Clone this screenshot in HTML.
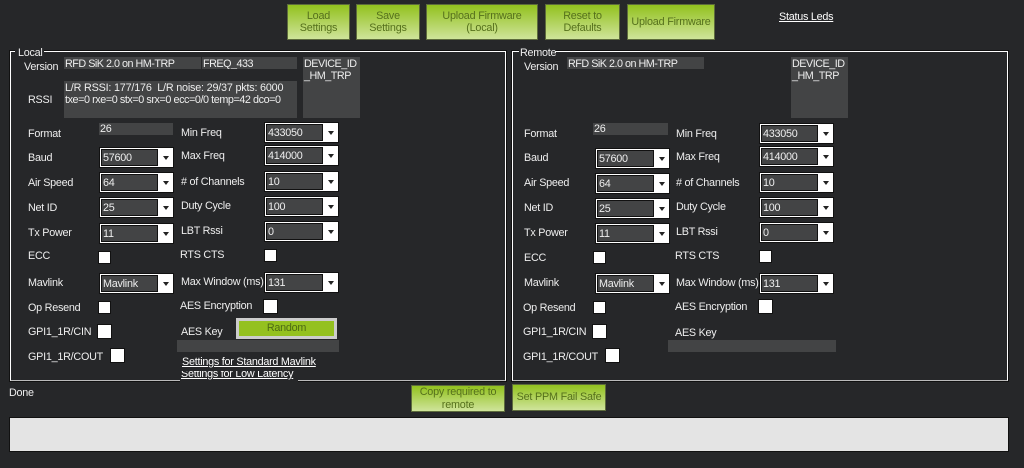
<!DOCTYPE html>
<html><head><meta charset="utf-8"><style>
html,body{margin:0;padding:0;background:#262729}
#p{position:relative;width:1024px;height:468px;overflow:hidden;background:#262729;font:10.8px "Liberation Sans",sans-serif;letter-spacing:-.25px;color:#eee}
#p *{position:absolute;box-sizing:border-box}
.l{white-space:nowrap;line-height:14px;margin-top:1px}
.b{background:linear-gradient(#92c11e,#cfe49a);border:1px solid #5d6b3c;color:#55701c;text-align:center;line-height:12.5px;display:flex;align-items:center;justify-content:center;white-space:nowrap;letter-spacing:-.2px}
.f{background:#434445;color:#eee;line-height:12px;padding:0 0 0 1px;white-space:pre;overflow:hidden}
.r{padding-top:1px}
.t{letter-spacing:-.5px}
.c{width:75px;height:21px;background:#fff;border:1px solid #111}
.c i{left:1px;top:1px;width:57px;height:17px;background:#434445;border:1px solid #111;font-style:normal;color:#eee;line-height:16px;padding-left:1px}
.c u{left:63px;top:8px;width:0;height:0;border:3px solid transparent;border-top:4px solid #222;border-bottom:0}
.k{background:#fff;width:11px;height:11px;box-shadow:0 0 0 1px #111}
.k2{width:13px;height:13px}
.g{border:1px solid #fff;border-bottom-color:#bbb;box-shadow:0 0 0 1px #111}
.s{background:#262729}
.a{color:#fff;text-decoration:underline;white-space:nowrap;line-height:14px}
</style></head><body><div id="p">
<div class="b" style="left:287px;top:4px;width:63px;height:36px">Load<br>Settings</div>
<div class="b" style="left:356px;top:4px;width:64px;height:36px">Save<br>Settings</div>
<div class="b" style="left:426px;top:4px;width:112px;height:36px">Upload Firmware<br>(Local)</div>
<div class="b" style="left:545px;top:4px;width:75px;height:36px">Reset to<br>Defaults</div>
<div class="b" style="left:627px;top:4px;width:88px;height:36px">Upload Firmware</div>
<span class="a" style="left:779px;top:10px">Status Leds</span>

<div class="g" style="left:10px;top:51px;width:496px;height:330px"></div>
<div class="s" style="left:15px;top:46px;width:29px;height:10px"></div>
<span class="l" style="left:18px;top:45px">Local</span>
<div class="g" style="left:512px;top:51px;width:496px;height:330px"></div>
<div class="s" style="left:519px;top:46px;width:36px;height:10px"></div>
<span class="l" style="left:520px;top:45px">Remote</span>

<!-- Local -->
<span class="l" style="left:24px;top:59px">Version</span>
<div class="f r t" style="left:64px;top:57px;width:233px;height:12px">RFD SiK 2.0 on HM-TRP</div>
<div class="f r t" style="left:201px;top:57px;width:96px;height:12px;border-left:1px solid #262729">FREQ_433</div>
<div class="f r t" style="left:303px;top:57px;width:57px;height:61px">DEVICE_ID
_HM_TRP</div>
<div class="f r" style="left:64px;top:81px;width:233px;height:37px;letter-spacing:-.2px">L/R RSSI: 177/176  L/R noise: 29/37 pkts: 6000
<span style="position:static;letter-spacing:-.43px">txe=0 rxe=0 stx=0 srx=0 ecc=0/0 temp=42 dco=0</span></div>
<span class="l" style="left:28px;top:92px">RSSI</span>
<span class="l" style="left:28px;top:126px">Format</span>
<div class="f" style="left:99px;top:123px;width:74px;height:12px">26</div>
<span class="l" style="left:28px;top:150px">Baud</span>
<div class="c" style="left:99px;top:147px"><i>57600</i><u></u></div>
<span class="l" style="left:28px;top:175px">Air Speed</span>
<div class="c" style="left:99px;top:172px"><i>64</i><u></u></div>
<span class="l" style="left:28px;top:200px">Net ID</span>
<div class="c" style="left:99px;top:197px"><i>25</i><u></u></div>
<span class="l" style="left:28px;top:225px">Tx Power</span>
<div class="c" style="left:99px;top:223px"><i>11</i><u></u></div>
<span class="l" style="left:28px;top:248px">ECC</span>
<div class="k" style="left:99px;top:252px"></div>
<span class="l" style="left:28px;top:275px">Mavlink</span>
<div class="c" style="left:99px;top:273px"><i>Mavlink</i><u></u></div>
<span class="l" style="left:28px;top:300px">Op Resend</span>
<div class="k" style="left:99px;top:302px"></div>
<span class="l" style="left:28px;top:324px">GPI1_1R/CIN</span>
<div class="k k2" style="left:98px;top:325px"></div>
<span class="l" style="left:28px;top:349px">GPI1_1R/COUT</span>
<div class="k k2" style="left:111px;top:349px"></div>

<span class="l" style="left:181px;top:125px">Min Freq</span>
<div class="c" style="left:264px;top:122px"><i>433050</i><u></u></div>
<span class="l" style="left:181px;top:148px">Max Freq</span>
<div class="c" style="left:264px;top:145px"><i>414000</i><u></u></div>
<span class="l" style="left:181px;top:174px"># of Channels</span>
<div class="c" style="left:264px;top:171px"><i>10</i><u></u></div>
<span class="l" style="left:181px;top:198px">Duty Cycle</span>
<div class="c" style="left:264px;top:196px"><i>100</i><u></u></div>
<span class="l" style="left:181px;top:223px">LBT Rssi</span>
<div class="c" style="left:264px;top:221px"><i>0</i><u></u></div>
<span class="l" style="left:180px;top:247px">RTS CTS</span>
<div class="k" style="left:265px;top:250px"></div>
<span class="l" style="left:181px;top:274px">Max Window (ms)</span>
<div class="c" style="left:264px;top:272px"><i>131</i><u></u></div>
<span class="l" style="left:180px;top:298px">AES Encryption</span>
<div class="k k2" style="left:264px;top:300px"></div>
<span class="l" style="left:181px;top:324px">AES Key</span>
<div style="left:236px;top:318px;width:101px;height:21px;background:#94c11f;border:3px solid #ccc;color:#4c6a14;text-align:center;line-height:14px">Random</div>
<div class="f" style="left:177px;top:340px;width:162px;height:12px"></div>
<span class="a" style="left:182px;top:355px">Settings for Standard Mavlink</span>
<div class="s" style="left:180px;top:371px;width:118px;height:12px;overflow:hidden"><span class="a" style="left:1px;top:-4px">Settings for Low Latency</span></div>

<!-- Remote -->
<span class="l" style="left:524px;top:59px">Version</span>
<div class="f r t" style="left:567px;top:57px;width:137px;height:12px">RFD SiK 2.0 on HM-TRP</div>
<div class="f r t" style="left:791px;top:57px;width:57px;height:61px">DEVICE_ID
_HM_TRP</div>
<span class="l" style="left:524px;top:126px">Format</span>
<div class="f" style="left:593px;top:123px;width:75px;height:12px">26</div>
<span class="l" style="left:524px;top:150px">Baud</span>
<div class="c" style="left:595px;top:148px"><i>57600</i><u></u></div>
<span class="l" style="left:524px;top:175px">Air Speed</span>
<div class="c" style="left:595px;top:173px"><i>64</i><u></u></div>
<span class="l" style="left:524px;top:200px">Net ID</span>
<div class="c" style="left:595px;top:198px"><i>25</i><u></u></div>
<span class="l" style="left:524px;top:225px">Tx Power</span>
<div class="c" style="left:595px;top:223px"><i>11</i><u></u></div>
<span class="l" style="left:524px;top:250px">ECC</span>
<div class="k" style="left:594px;top:252px"></div>
<span class="l" style="left:524px;top:275px">Mavlink</span>
<div class="c" style="left:595px;top:273px"><i>Mavlink</i><u></u></div>
<span class="l" style="left:523px;top:300px">Op Resend</span>
<div class="k" style="left:594px;top:302px"></div>
<span class="l" style="left:523px;top:324px">GPI1_1R/CIN</span>
<div class="k k2" style="left:593px;top:325px"></div>
<span class="l" style="left:523px;top:349px">GPI1_1R/COUT</span>
<div class="k k2" style="left:606px;top:349px"></div>

<span class="l" style="left:676px;top:126px">Min Freq</span>
<div class="c" style="left:759px;top:123px"><i>433050</i><u></u></div>
<span class="l" style="left:676px;top:149px">Max Freq</span>
<div class="c" style="left:759px;top:146px"><i>414000</i><u></u></div>
<span class="l" style="left:676px;top:175px"># of Channels</span>
<div class="c" style="left:759px;top:172px"><i>10</i><u></u></div>
<span class="l" style="left:676px;top:199px">Duty Cycle</span>
<div class="c" style="left:759px;top:197px"><i>100</i><u></u></div>
<span class="l" style="left:676px;top:224px">LBT Rssi</span>
<div class="c" style="left:759px;top:222px"><i>0</i><u></u></div>
<span class="l" style="left:675px;top:248px">RTS CTS</span>
<div class="k" style="left:760px;top:251px"></div>
<span class="l" style="left:676px;top:275px">Max Window (ms)</span>
<div class="c" style="left:759px;top:273px"><i>131</i><u></u></div>
<span class="l" style="left:675px;top:299px">AES Encryption</span>
<div class="k k2" style="left:759px;top:300px"></div>
<span class="l" style="left:675px;top:325px">AES Key</span>
<div class="f" style="left:668px;top:340px;width:168px;height:12px"></div>

<span class="l" style="left:9px;top:385px">Done</span>
<div class="b" style="left:411px;top:385px;width:94px;height:27px">Copy required to<br>remote</div>
<div class="b" style="left:512px;top:384px;width:94px;height:27px">Set PPM Fail Safe</div>
<div style="left:9px;top:417px;width:1000px;height:35px;background:#e4e4e4;border:1px solid #111"></div>
</div></body></html>
